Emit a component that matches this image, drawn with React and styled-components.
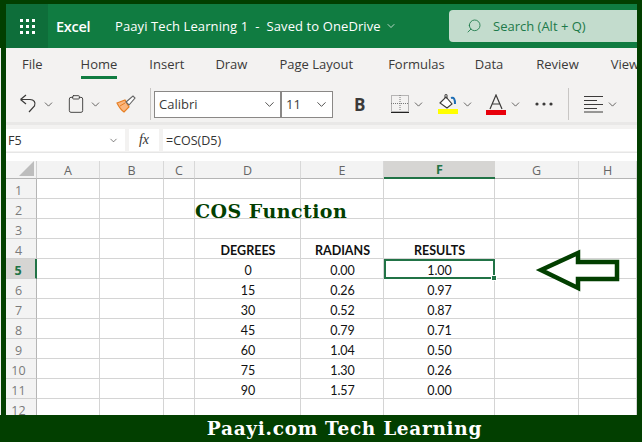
import React from "react";
import styled, {createGlobalStyle} from "styled-components";
import {ChevronDown, Clipboard, Search} from "lucide-react";

const Global = createGlobalStyle`
  html, body { margin: 0; padding: 0; background: #fff; }
  body { font-family: "Open Sans", "Noto Sans", sans-serif; }
`;

const Frame = styled.div`
  position: relative;
  width: 642px;
  height: 442px;
  overflow: hidden;
  background: #023f00;
  padding-top: 4px;
  box-sizing: border-box;
  display: flex;
  flex-direction: column;
`;

const Header = styled.div`
  height: 44px;
  margin: 0 5px 0 6px;
  background: #107c41;
  display: flex;
  align-items: center;
  color: #fff;
  flex: none;
`;

const Launcher = styled.div`
  width: 42px;
  height: 44px;
  background: #0e6e3a;
  display: grid;
  grid-template-columns: repeat(3, 3px);
  gap: 3px;
  align-content: center;
  justify-content: center;
  flex: none;
  i { display: block; width: 3px; height: 3px; background: #fff; }
`;

const AppName = styled.div`
  font-size: 14.5px;
  font-weight: 600;
  margin-left: 8px;
  width: 59px;
  letter-spacing: -0.3px;
`;

const DocTitle = styled.div`
  font-size: 13px;
  width: 334px;
  display: flex;
  align-items: center;
  gap: 4px;
  white-space: pre;
  letter-spacing: 0.1px;
`;

const SearchBox = styled.div`
  flex: 1;
  height: 32px;
  background: #c3dccd;
  border-radius: 4px 0 0 4px;
  display: flex;
  align-items: center;
  color: #1d7a4a;
  font-size: 13px;
  padding-left: 17px;
  gap: 11px;
  svg { transform: scaleX(-1); }
`;

const Body = styled.div`
  flex: 1;
  min-height: 0;
  border-left: 1px solid #f0f0f0;
  padding: 0 5px;
  display: flex;
  flex-direction: column;
`;

const Ribbon = styled.div`
  background: #f3f2f1;
  height: 77px;
  flex: none;
  overflow: hidden;
  box-shadow: inset 0 -3px 0 #e9e8e7;
`;

const Tabs = styled.div`
  height: 38px;
  display: flex;
  gap: 32px;
  padding-left: 16px;
  font-size: 13px;
  color: #3b3a39;
  white-space: nowrap;
`;

const Tab = styled.div`
  position: relative;
  line-height: 33px;
  margin-right: ${p => p.$extra || 0}px;
  &::after {
    content: "";
    display: ${p => p.$active ? "block" : "none"};
    position: absolute;
    left: 0;
    right: 0;
    top: 28px;
    height: 3px;
    background: #107c41;
  }
`;

const Toolbar = styled.div`
  height: 36px;
  display: flex;
  align-items: center;
  color: #3b3a39;
  white-space: nowrap;
`;

const Tool = styled.div`
  display: flex;
  align-items: center;
  gap: ${p => p.$gap ?? 3}px;
  margin-left: ${p => p.$left || 0}px;
  flex: none;
`;

const Separator = styled.div`
  width: 1px;
  height: 32px;
  background: #c8c6c4;
  margin-left: ${p => p.$left || 0}px;
  flex: none;
`;

const Select = styled.div`
  width: ${p => p.$width}px;
  height: 27px;
  box-sizing: border-box;
  background: #fff;
  border: 1px solid #8a8886;
  margin-left: ${p => p.$left || 0}px;
  display: flex;
  align-items: center;
  justify-content: space-between;
  padding: 0 3px 0 4px;
  font: 13px "Open Sans", sans-serif;
  flex: none;
`;

const BoldMark = styled.div`
  font: bold 17px "Open Sans", sans-serif;
  color: #3b3a39;
  margin-left: ${p => p.$left}px;
`;

const FormulaBar = styled.div`
  height: 36px;
  flex: none;
  display: flex;
  gap: 4px;
  background: #fff;
  padding: 0;
  position: relative;
  align-items: flex-start;
  font-size: 12.5px;
  color: #333;
`;

const FormulaStrip = styled.div`
  height: 28px;
  width: 100%;
  background: #f3f2f1;
  padding-top: 4px;
  padding-bottom: 1px;
  box-sizing: border-box;
  display: flex;
  gap: 4px;
  border-bottom: 1px solid #e6e6e6;
`;

const NameBox = styled.div`
  width: 119px;
  background: #fff;
  display: flex;
  align-items: center;
  justify-content: space-between;
  padding: 1px 6px 0 2px;
  box-sizing: border-box;
  flex: none;
`;

const FxBox = styled.div`
  width: 30px;
  background: #fff;
  display: flex;
  align-items: center;
  justify-content: center;
  font: italic 14px "Liberation Serif", serif;
  flex: none;
`;

const FormulaInput = styled.div`
  flex: 1;
  background: #fff;
  display: flex;
  align-items: center;
  padding: 1px 0 0 3px;
`;

const Sheet = styled.div`
  position: relative;
  flex: 1;
  min-height: 0;
  overflow: hidden;
  display: grid;
  grid-template-columns: 31px 63px 64px 31px 106px 83px 111px 84px 58px;
  grid-auto-rows: 20px;
  grid-template-rows: 18px;
  background: #fff;
  font: 12.5px Lato, "Liberation Sans", sans-serif;
  color: #111;
`;

const Corner = styled.div`
  background: #f3f3f3;
  border-bottom: 1px solid #b5b5b5;
  border-right: 1px solid #d0d0d0;
  position: relative;
  &::after {
    content: "";
    position: absolute;
    right: 2px;
    bottom: 2px;
    border-style: solid;
    border-width: 0 0 15px 15px;
    border-color: transparent transparent #bdbdbd transparent;
  }
`;

const ColHead = styled.div`
  background: ${p => p.$selected ? "#d6d5d3" : "#f3f3f3"};
  color: ${p => p.$selected ? "#217346" : "#666"};
  font: ${p => p.$selected ? "bold" : "normal"} 12.5px "Open Sans", sans-serif;
  border-right: ${p => p.$selected ? "none" : "1px solid #d8d8d8"};
  border-bottom: ${p => p.$selected ? "2px solid #217346" : "1px solid #b5b5b5"};
  display: flex;
  align-items: center;
  justify-content: center;
  padding-top: 1px;
  box-sizing: border-box;
`;

const RowHead = styled.div`
  background: ${p => p.$selected ? "#d6d5d3" : "#f3f3f3"};
  color: ${p => p.$selected ? "#217346" : "#7a7a7a"};
  font: ${p => p.$selected ? "bold" : "normal"} 12.5px "Open Sans", sans-serif;
  border-right: ${p => p.$selected ? "2px solid #217346" : "1px solid #b5b5b5"};
  border-bottom: 1px solid #d0d0d0;
  display: flex;
  align-items: center;
  justify-content: center;
  padding: 3px 5px 0 0;
  box-sizing: border-box;
`;

const Cell = styled.div`
  position: relative;
  border-right: 1px solid #d4d4d4;
  border-bottom: 1px solid #d4d4d4;
  box-sizing: border-box;
  display: flex;
  align-items: center;
  justify-content: center;
  padding: 3px 0 0 1px;
  font-weight: ${p => p.$bold ? 700 : 400};
  white-space: nowrap;
  ${p => p.$active && `
    outline: 2px solid #217346;
    outline-offset: -2px;
    z-index: 1;
    &::after {
      content: "";
      position: absolute;
      right: -3px;
      bottom: -3px;
      width: 4px;
      height: 4px;
      background: #217346;
      border: 1px solid #fff;
    }
  `}
`;

const SheetTitle = styled.span`
  position: absolute;
  left: 0;
  top: 1px;
  font: bold 19px "DejaVu Serif", serif;
  color: #023f00;
  letter-spacing: 0.45px;
  line-height: 22px;
  z-index: 1;
`;

const ArrowMark = styled.svg`
  position: absolute;
  left: 534px;
  top: 248px;
  z-index: 2;
`;

const Footer = styled.div`
  height: 27px;
  flex: none;
  background: #023f00;
  color: #fff;
  font: bold 18.5px "DejaVu Serif", serif;
  letter-spacing: 0.7px;
  display: flex;
  align-items: center;
  justify-content: center;
  padding-left: 47px;
  box-sizing: border-box;
  white-space: nowrap;
`;

const Chev = ({size = 13, color = "#3b3a39"}) => <ChevronDown size={size} color={color} strokeWidth={1.4}/>;

const UndoIcon = () => (
    <svg width="20" height="20" viewBox="0 0 20 20" fill="none" stroke="#3b3a39" strokeWidth="1.2">
        <path d="M1.5 5.5 L7 1 M1.5 5.5 L7 10 M1.5 5.5 H11 C15 5.5 17 8.5 15.5 12 L10 18"/>
    </svg>
);

const BrushIcon = () => (
    <svg width="20" height="18" viewBox="0 0 20 18">
        <path d="M1 8 L9 5 L13 12 L8 17 C5 15 3 12 1 8Z" fill="#fbb67e" stroke="#e67e22" strokeWidth="1.2"/>
        <path d="M4 11 L9 8" stroke="#e67e22" strokeWidth="1"/>
        <path d="M10 7 L17 1 L19 3 L13 10Z" fill="#fff" stroke="#666" strokeWidth="1.1"/>
    </svg>
);

const BordersIcon = () => (
    <svg width="18" height="18" viewBox="0 0 18 18" fill="none" stroke="#777" strokeWidth="1" strokeDasharray="1 1">
        <rect x="0.5" y="0.5" width="17" height="16"/>
        <path d="M9 0V16 M0 8.5H18"/>
        <path d="M0 17.5H18" stroke="#222" strokeDasharray="none"/>
    </svg>
);

const FillIcon = () => (
    <svg width="20" height="20" viewBox="0 0 20 20" fill="none">
        <path d="M2 9 L8 3 L14 10 L9 14 Z" stroke="#3b3a39" strokeWidth="1.1" fill="#fff"/>
        <path d="M7 4 V1 C7 0 9 0 9 1 V5" stroke="#3b3a39" strokeWidth="1"/>
        <path d="M13 4 C16 3 17 5 17 10" stroke="#1f6fb5" strokeWidth="2"/>
        <rect x="0" y="15" width="20" height="5" fill="#ffff00"/>
    </svg>
);

const FontColorIcon = () => (
    <svg width="20" height="21" viewBox="0 0 20 21" fill="none" stroke="#3b3a39" strokeWidth="1.2">
        <path d="M4 15 L10 1 L16 15 M6 10 H14"/>
        <rect x="0" y="16" width="20" height="5" fill="#e8000b" stroke="none"/>
    </svg>
);

const DotsIcon = () => (
    <svg width="18" height="4" viewBox="0 0 18 4" fill="#3b3a39">
        <circle cx="2" cy="2" r="1.6"/><circle cx="9" cy="2" r="1.6"/><circle cx="16" cy="2" r="1.6"/>
    </svg>
);

const AlignIcon = () => (
    <svg width="19" height="18" viewBox="0 0 19 18" stroke="#3b3a39" strokeWidth="1">
        <path d="M0 1.5H19 M0 5.5H13 M0 9.5H19 M0 13.5H13 M0 17H19"/>
    </svg>
);

const columns = ["A", "B", "C", "D", "E", "F", "G", "H"];

const rows = {
    4: ["DEGREES", "RADIANS", "RESULTS"],
    5: ["0", "0.00", "1.00"],
    6: ["15", "0.26", "0.97"],
    7: ["30", "0.52", "0.87"],
    8: ["45", "0.79", "0.71"],
    9: ["60", "1.04", "0.50"],
    10: ["75", "1.30", "0.26"],
    11: ["90", "1.57", "0.00"],
};

const SheetGrid = () => (
    <Sheet>
        <Corner/>
        {columns.map(c => <ColHead key={c} $selected={c === "F"}>{c}</ColHead>)}
        {Array.from({length: 12}, (_, i) => i + 1).map(r => (
            <React.Fragment key={r}>
                <RowHead $selected={r === 5}>{r}</RowHead>
                {columns.map((c, i) => {
                    const value = rows[r] && i >= 3 && i <= 5 ? rows[r][i - 3] : null;
                    return (
                        <Cell key={c} $bold={r === 4} $active={r === 5 && c === "F"}>
                            {r === 2 && c === "D" && <SheetTitle>COS Function</SheetTitle>}
                            {value}
                        </Cell>
                    );
                })}
            </React.Fragment>
        ))}
    </Sheet>
);

const App = () => (
    <Frame>
        <Global/>
        <Header>
            <Launcher>{Array.from({length: 9}, (_, i) => <i key={i}/>)}</Launcher>
            <AppName>Excel</AppName>
            <DocTitle>{"Paayi Tech Learning 1  -  Saved to OneDrive"}<Chev size={12} color="#fff"/></DocTitle>
            <SearchBox><Search size={16} strokeWidth={1.3}/>Search (Alt + Q)</SearchBox>
        </Header>
        <Body>
            <Ribbon>
                <Tabs>
                    <Tab $extra={6}>File</Tab>
                    <Tab $active>Home</Tab>
                    <Tab $extra={-1}>Insert</Tab>
                    <Tab>Draw</Tab>
                    <Tab $extra={3}>Page Layout</Tab>
                    <Tab $extra={-2}>Formulas</Tab>
                    <Tab $extra={1}>Data</Tab>
                    <Tab>Review</Tab>
                    <Tab>View</Tab>
                </Tabs>
                <Toolbar>
                    <Tool $left={13}><UndoIcon/><Chev/></Tool>
                    <Tool $left={11}><Clipboard size={20} strokeWidth={1.1}/><Chev/></Tool>
                    <Tool $left={14}><BrushIcon/></Tool>
                    <Separator $left={14}/>
                    <Select $width={127} $left={3}>Calibri<Chev size={15}/></Select>
                    <Select $width={52}>11<Chev size={15}/></Select>
                    <BoldMark $left={21}>B</BoldMark>
                    <Tool $left={26}><BordersIcon/><Chev/></Tool>
                    <Tool $left={13}><FillIcon/><Chev/></Tool>
                    <Tool $left={12}><FontColorIcon/><Chev/></Tool>
                    <Tool $left={13}><DotsIcon/></Tool>
                    <Separator $left={15}/>
                    <Tool $left={15}><AlignIcon/><Chev/></Tool>
                </Toolbar>
            </Ribbon>
            <FormulaBar>
                <FormulaStrip>
                    <NameBox>F5<Chev size={11}/></NameBox>
                    <FxBox>fx</FxBox>
                    <FormulaInput>=COS(D5)</FormulaInput>
                </FormulaStrip>
            </FormulaBar>
            <SheetGrid/>
        </Body>
        <Footer>Paayi.com Tech Learning</Footer>
        <ArrowMark width="90" height="46" viewBox="0 0 90 46">
            <path d="M7 22 L44 5 V14 H83 V31 H44 V40 Z" fill="#fff" stroke="#023f00" strokeWidth="4.5" strokeLinejoin="miter"/>
        </ArrowMark>
    </Frame>
);

export default App;
